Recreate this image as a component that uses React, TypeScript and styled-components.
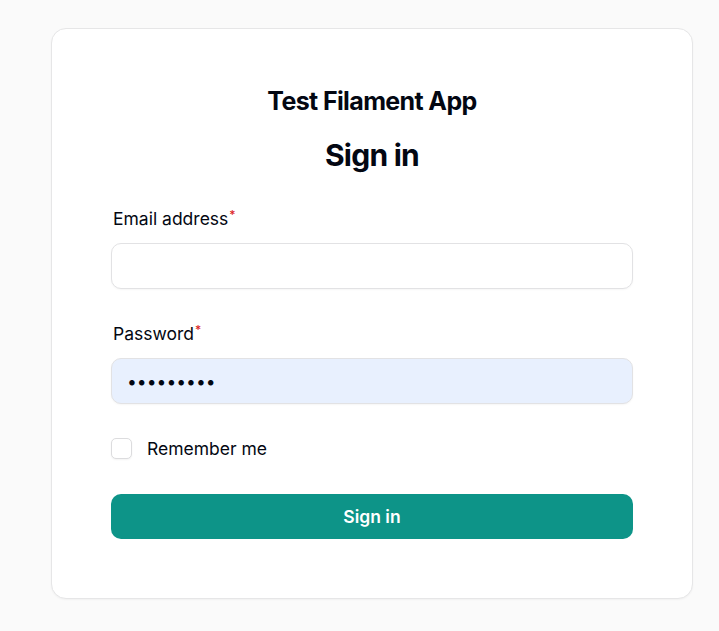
import React from "react";
import styled, {createGlobalStyle} from "styled-components";

const GlobalStyle = createGlobalStyle`
  html, body {
    margin: 0;
    padding: 0;
    background: #fafafa;
    font-family: Inter, "Noto Sans", sans-serif;
    color: #030712;
  }

  * {
    box-sizing: border-box;
  }
`;

const Page = styled.main`
  min-height: 631px;
  padding: 28px 0 0 51px;
`;

const Card = styled.section`
  width: 642px;
  background: #fff;
  border-radius: 15px;
  border: 1px solid #e6e6e7;
  box-shadow: 0 1px 2px rgba(0, 0, 0, 0.04);
  padding: 60px 59px 59px;
  display: flex;
  flex-direction: column;
`;

const Header = styled.header`
  display: flex;
  flex-direction: column;
  align-items: center;
`;

const Brand = styled.div`
  font-size: 25px;
  line-height: 25px;
  font-weight: 700;
  letter-spacing: -0.025em;
  margin-bottom: 21px;
`;

const Heading = styled.h1`
  margin: 0;
  font-size: 30px;
  line-height: 40px;
  font-weight: 700;
  letter-spacing: -0.025em;
`;

const Form = styled.form`
  margin-top: 31px;
  display: flex;
  flex-direction: column;
`;

const Field = styled.div`
  display: flex;
  flex-direction: column;
  gap: 12px;
  margin-bottom: 32px;
`;

const Label = styled.label`
  font-size: 17.5px;
  line-height: 25px;
  font-weight: 400;
  padding-left: 2px;

  & sup {
    color: #dc2626;
    font-size: 12px;
    font-weight: 500;
    vertical-align: top;
    position: relative;
    top: -4px;
    margin-left: 1px;
  }
`;

const Input = styled.input<{ $filled?: boolean }>`
  width: 100%;
  height: 46px;
  border: 1px solid #e2e2e4;
  border-radius: 10px;
  padding: 0 15px;
  font-family: Inter, sans-serif;
  font-size: 17.5px;
  color: #030712;
  outline: none;
  background: ${({$filled}) => ($filled ? "#e8f0fe" : "#fff")};
  box-shadow: 0 1px 2px rgba(0, 0, 0, 0.04);
`;

const CheckRow = styled.label`
  display: flex;
  align-items: center;
  gap: 15px;
  font-size: 17.5px;
  line-height: 25px;
  margin-bottom: 33px;
`;

const Check = styled.span`
  width: 21px;
  height: 21px;
  border: 1px solid #dcdcde;
  border-radius: 5px;
  background: #fff;
  box-shadow: 0 1px 2px rgba(0, 0, 0, 0.05);
`;

const Button = styled.button`
  height: 45px;
  width: 100%;
  border: none;
  border-radius: 10px;
  background: #0d9488;
  color: #fff;
  font-family: Inter, sans-serif;
  font-size: 17.5px;
  font-weight: 600;
`;

export default function App() {
    return (
        <>
            <GlobalStyle/>
            <Page>
                <Card>
                    <Header>
                        <Brand>Test Filament App</Brand>
                        <Heading>Sign in</Heading>
                    </Header>
                    <Form onSubmit={(e) => e.preventDefault()}>
                        <Field>
                            <Label>Email address<sup>*</sup></Label>
                            <Input type="email"/>
                        </Field>
                        <Field>
                            <Label>Password<sup>*</sup></Label>
                            <Input type="password" $filled defaultValue="password1"/>
                        </Field>
                        <CheckRow>
                            <Check/>
                            Remember me
                        </CheckRow>
                        <Button type="submit">Sign in</Button>
                    </Form>
                </Card>
            </Page>
        </>
    );
}
